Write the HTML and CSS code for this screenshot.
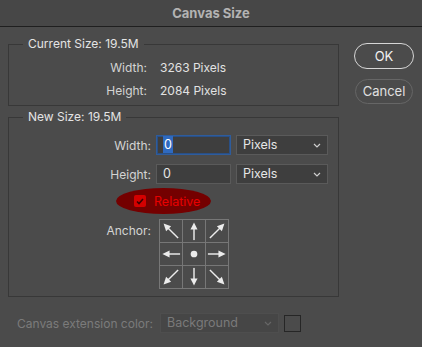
FILE: index.html
```html
<!DOCTYPE html>
<html>
<head>
  <title>Canvas Size</title>
  <link rel="stylesheet" href="styles.css">
</head>
<body>
  <div class="dialog">
    <div class="titlebar">Canvas Size</div>
    <div class="content">
      <div class="main">
        <div class="group current">
          <div class="group-title">Current Size: 19.5M</div>
          <div class="info">
            <span class="label">Width:</span><span class="value">3263 Pixels</span>
            <span class="label">Height:</span><span class="value">2084 Pixels</span>
          </div>
        </div>

        <div class="group newsize">
          <div class="group-title">New Size: 19.5M</div>
          <div class="form">
            <span class="label">Width:</span>
            <div class="field focused"><span class="selection">0</span></div>
            <div class="select">Pixels
              <svg class="chevron" width="8" height="5" viewBox="0 0 8 5"><polyline points="1,1 4,4 7,1" /></svg>
            </div>

            <span class="label">Height:</span>
            <div class="field">0</div>
            <div class="select">Pixels
              <svg class="chevron" width="8" height="5" viewBox="0 0 8 5"><polyline points="1,1 4,4 7,1" /></svg>
            </div>

            <div class="relative">
              <span class="check">
                <svg width="8" height="7" viewBox="0 0 8 7"><polyline points="1,3.5 3,5.5 7,1" /></svg>
              </span>
              Relative
            </div>

            <span class="label anchor-label">Anchor:</span>
            <div class="anchor">
              <div class="cell"><svg viewBox="0 0 23 23" class="nw"><use href="#diag" /></svg></div>
              <div class="cell"><svg viewBox="0 0 23 23" class="n"><use href="#arrow" /></svg></div>
              <div class="cell"><svg viewBox="0 0 23 23" class="ne"><use href="#diag" /></svg></div>
              <div class="cell"><svg viewBox="0 0 23 23" class="w"><use href="#arrow" /></svg></div>
              <div class="cell"><svg viewBox="0 0 23 23"><circle cx="11.5" cy="11.5" r="3.5" /></svg></div>
              <div class="cell"><svg viewBox="0 0 23 23" class="e"><use href="#arrow" /></svg></div>
              <div class="cell"><svg viewBox="0 0 23 23" class="sw"><use href="#diag" /></svg></div>
              <div class="cell"><svg viewBox="0 0 23 23" class="s"><use href="#arrow" /></svg></div>
              <div class="cell"><svg viewBox="0 0 23 23" class="se"><use href="#diag" /></svg></div>
            </div>
          </div>
        </div>

        <div class="extension">
          <span class="label">Canvas extension color:</span>
          <div class="select disabled">Background
            <svg class="chevron" width="8" height="5" viewBox="0 0 8 5"><polyline points="1,1 4,4 7,1" /></svg>
          </div>
          <div class="swatch"></div>
        </div>
      </div>

      <div class="buttons">
        <div class="btn ok">OK</div>
        <div class="btn cancel">Cancel</div>
      </div>
    </div>
  </div>

  <svg width="0" height="0" class="defs">
    <defs>
      <g id="arrow">
        <polygon points="11.5,2.5 7.8,10 15.2,10" />
        <rect x="10.75" y="9" width="1.5" height="12" />
      </g>
      <g id="diag">
        <polygon points="11.5,0.5 7.8,8 15.2,8" />
        <rect x="10.75" y="7" width="1.5" height="15" />
      </g>
    </defs>
  </svg>
</body>
</html>
```

FILE: styles.css
```css
html, body {
margin: 0;
padding: 0;
}
body {
background-color: #4b4b4b;
color: #dedede;
font-family: Inter, "Noto Sans", sans-serif;
font-size: 12px;
}
.dialog {
width: 422px;
height: 347px;
overflow: hidden;
}
.titlebar {
height: 26px;
line-height: 26px;
text-align: center;
font-weight: bold;
font-size: 13px;
color: #b3b3b3;
background-color: #474747;
border-bottom: 1px solid #1f1f1f;
}
.content {
display: flex;
}
.main {
padding: 17px 0 0 8px;
width: 331px;
}
.group {
border: 1px solid #383838;
}
.group-title {
margin: -9px 0 0 14px;
padding: 0 5px;
width: max-content;
line-height: 16px;
background-color: #4b4b4b;
color: #e4e4e4;
}
.current {
padding-bottom: 3px;
}
.info {
display: grid;
grid-template-columns: 138px auto;
column-gap: 13px;
grid-auto-rows: 23px;
align-items: center;
margin-top: 4px;
}
.label {
text-align: right;
color: #d4d4d4;
}
.value {
color: #e2e2e2;
}
.newsize {
margin-top: 11px;
padding-bottom: 7px;
}
.form {
display: grid;
grid-template-columns: 142px 75px 92px;
column-gap: 5px;
row-gap: 9px;
align-items: center;
margin-top: 10px;
}
.field, .select {
height: 20px;
box-sizing: border-box;
line-height: 18px;
border: 1px solid #5a5a5a;
background-color: #3e3e3e;
color: #e6e6e6;
padding: 0 5px;
font-size: 12.5px;
}
.field {
padding-left: 6px;
}
.field.focused {
border-color: #2e5c9c;
box-shadow: inset 0 0 0 1px #2a4f84;
}
.selection {
background-color: #2f6ac0;
color: #fff;
padding: 1px 1px;
}
.select {
position: relative;
padding-left: 6px;
}
.chevron {
position: absolute;
right: 6px;
top: 7px;
fill: none;
stroke: #cfcfcf;
stroke-width: 1.2;
}
.relative {
grid-column: 1 / 4;
margin: -5px 0 0 107px;
width: 95px;
height: 26px;
border-radius: 50%;
background-color: #740000;
color: #e80000;
display: flex;
align-items: center;
gap: 8px;
padding-left: 18px;
box-sizing: border-box;
font-size: 12.5px;
}
.check {
width: 12px;
height: 12px;
border-radius: 2px;
background-color: #d40000;
display: flex;
align-items: center;
justify-content: center;
}
.check svg {
fill: none;
stroke: #3a0000;
stroke-width: 1.6;
}
.anchor-label {
align-self: start;
line-height: 16px;
}
.anchor {
grid-column: 2 / 4;
margin-top: -4px;
margin-left: 3px;
display: grid;
grid-template-columns: repeat(3, 23px);
grid-template-rows: repeat(3, 23px);
width: 70px;
border-top: 1px solid #777;
border-left: 1px solid #777;
box-sizing: border-box;
}
.cell {
border-right: 1px solid #777;
border-bottom: 1px solid #777;
width: 23px;
height: 23px;
box-sizing: border-box;
}
.cell svg {
display: block;
width: 22px;
height: 22px;
fill: #ececec;
}
.n { transform: rotate(0deg); }
.ne { transform: rotate(45deg); }
.e { transform: rotate(90deg); }
.se { transform: rotate(135deg); }
.s { transform: rotate(180deg); }
.sw { transform: rotate(225deg); }
.w { transform: rotate(270deg); }
.nw { transform: rotate(315deg); }
.extension {
display: flex;
align-items: center;
margin-top: 16px;
padding-left: 9px;
}
.extension .label {
color: #7b7b7b;
}
.select.disabled {
margin-left: 7px;
width: 119px;
background-color: #464646;
border-color: #4e4e4e;
color: #7a7a7a;
}
.select.disabled .chevron {
stroke: #666;
}
.swatch {
margin-left: 5px;
width: 17px;
height: 17px;
box-sizing: border-box;
border: 1px solid #262626;
}
.buttons {
padding: 16px 0 0 15px;
display: flex;
flex-direction: column;
font-size: 13px;
}
.btn {
box-sizing: border-box;
text-align: center;
border-radius: 13px;
}
.ok {
width: 60px;
height: 26px;
line-height: 24px;
border: 1px solid #d6d6d6;
color: #f2f2f2;
}
.cancel {
width: 58px;
height: 25px;
line-height: 23px;
margin: 10px 0 0 1px;
border: 1px solid #666;
color: #e0e0e0;
}
.defs {
position: absolute;
}
```
